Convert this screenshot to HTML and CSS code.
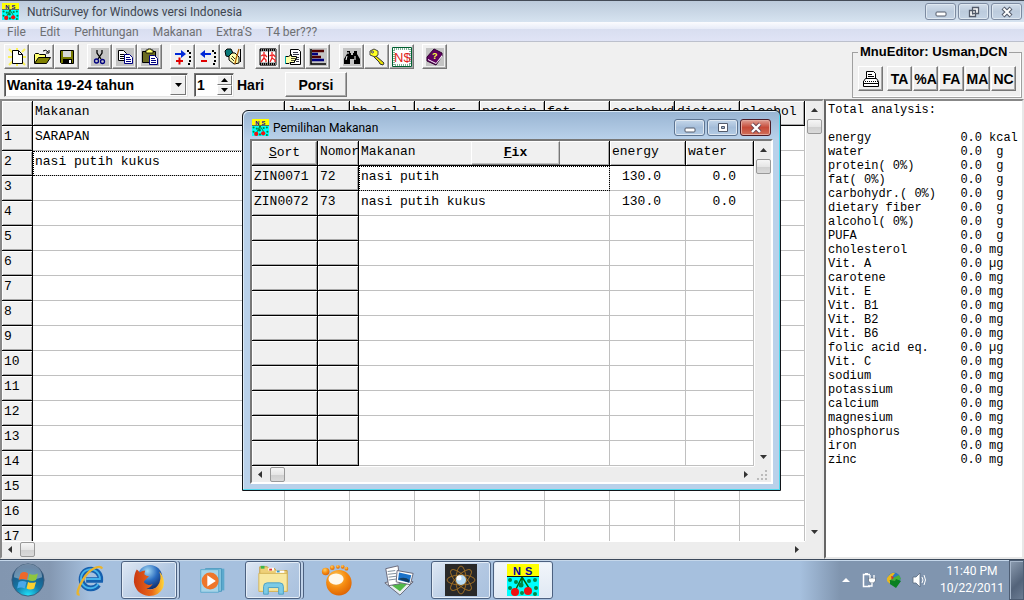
FILE: index.html
```html
<!DOCTYPE html>
<html lang="id">
<head>
<meta charset="utf-8">
<title>NutriSurvey for Windows versi Indonesia</title>
<link rel="stylesheet" href="styles.css">
</head>
<body>
<svg class="defs" aria-hidden="true">
  <symbol id="ns" viewBox="0 0 32 32">
    <path fill="#ff0" d="M0 0h32v12H0z"/><path fill="#0ff" d="M0 13h32v19H0z"/><path fill="#111" d="M0 12h32v1H0z"/>
    <text x="6" y="11" class="ns-letter">N</text><text x="18" y="11" class="ns-letter">S</text>
    <path d="M15 13L9 25M15 13v6M15 13l7 11" stroke="#060" stroke-width="1.4" fill="none"/>
    <g fill="#084"><circle cx="3" cy="16" r="2"/><circle cx="3" cy="24" r="2"/><circle cx="9" cy="18" r="2"/><circle cx="14" cy="21" r="2.5"/><circle cx="22" cy="17" r="2"/><circle cx="28" cy="16" r="2"/><circle cx="29" cy="24" r="2"/><circle cx="15" cy="29" r="2"/><circle cx="28" cy="30" r="2"/></g>
    <circle cx="8" cy="28" r="4" fill="#f01010"/><circle cx="21" cy="27" r="4" fill="#f01010"/>
  </symbol>
  <symbol id="up" viewBox="0 0 7 4"><path d="M0 4L3.500 0 7 4z"/></symbol>
  <symbol id="down" viewBox="0 0 7 4"><path d="M0 0h7L3.500 4z"/></symbol>
  <symbol id="left" viewBox="0 0 4 7"><path d="M4 0v7L0 3.500z"/></symbol>
  <symbol id="right" viewBox="0 0 4 7"><path d="M0 0v7l4-3.500z"/></symbol>
  <symbol id="min" viewBox="0 0 12 12"><rect x="1" y="6" width="10" height="4" rx="1" fill="#fff" stroke="#535b6b"/></symbol>
</svg>

<div class="app">
  <header class="titlebar">
    <svg class="app-icon"><use href="#ns"/></svg>
    <h1 class="title">NutriSurvey for Windows versi Indonesia</h1>
    <div class="window-buttons">
      <button class="wb" aria-label="Minimize"><svg class="i12"><use href="#min"/></svg></button>
      <button class="wb" aria-label="Restore"><svg class="i12" viewBox="0 0 12 12"><path d="M4.500 1.500h6v6h-6z M1.500 4.500h6v6h-6z" fill="#fff" stroke="#535b6b" stroke-width="1.300"/><path d="M4 7h1.500v1.500H4z" fill="#535b6b"/></svg></button>
      <button class="wb" aria-label="Close"><svg class="i12" viewBox="0 0 12 12"><path d="M2 2l8 8M10 2l-8 8" stroke="#535b6b" stroke-width="4.200"/><path d="M2.500 2.500l7 7M9.500 2.500l-7 7" stroke="#fff" stroke-width="2"/></svg></button>
    </div>
  </header>

  <nav class="menubar">
    <button>File</button><button>Edit</button><button>Perhitungan</button><button>Makanan</button><button>Extra'S</button><button>T4 ber???</button>
  </nav>

  <div class="toolbar">
    <div class="tools">
      <div class="tool-row">
        <div class="tool-group">
          <button class="tool" aria-label="New"><svg class="i18" viewBox="0 0 18 18"><path d="M1 1l4 4M9 0v3M17 1l-3 3M0 9h4M14 9h4M1 17l4-4M17 17l-3-3M9 15v3" stroke="#fbf35a" stroke-width="2"/><path d="M4.500 2.500h6l4 4v9h-10z" fill="#fff" stroke="#000"/><path d="M10.500 2.500v4h4" fill="none" stroke="#000"/></svg></button>
          <button class="tool" aria-label="Open"><svg class="i18" viewBox="0 0 18 18"><path d="M1.500 15V6.500l1-1h3l1 1h6V9" fill="#ffff70" stroke="#000"/><path d="M1.500 15.500l4-6h12l-4 6z" fill="#808000" stroke="#000"/><path d="M10 3q3-2 5 1m1-2v3h-3" fill="none" stroke="#000"/></svg></button>
          <button class="tool" aria-label="Save"><svg class="i18" viewBox="0 0 18 18"><path d="M2.500 2.500h13v13h-12l-1-1z" fill="#777a00" stroke="#000"/><path d="M5 3h8v6H5z" fill="#d8d8d8"/><path d="M5 11h9v5H5z"/><path d="M11 12h2v3h-2z" fill="#fff"/></svg></button>
        </div>
        <div class="tool-group">
          <button class="tool" aria-label="Cut"><svg class="i18 shade" viewBox="0 0 18 18"><path d="M6 2v3l4 6M11 2v3l-4 6" stroke="#000" stroke-width="1.300" fill="none"/><g fill="none" stroke="#000080" stroke-width="1.300"><circle cx="5.500" cy="13" r="2"/><circle cx="11.500" cy="13.500" r="2"/></g></svg></button>
          <button class="tool" aria-label="Copy"><svg class="i18 shade" viewBox="0 0 18 18"><path d="M2.500 2.500h5l3 3v7h-8z" fill="#fff" stroke="#000"/><path d="M4 6.500h4M4 8.500h4M4 10.500h4" stroke="#000"/><path d="M8.500 6.500h5l3 3v6h-8z" fill="#fff" stroke="#000080"/><path d="M10 9.500h4M10 11.500h5M10 13.500h5" stroke="#000080"/></svg></button>
          <button class="tool" aria-label="Paste"><svg class="i18 shade" viewBox="0 0 18 18"><path d="M1.500 3.500h13v11h-13z" fill="#6b6b20" stroke="#000"/><path d="M5 4V2h2V1h3v1h2v3H5z" fill="#ffff70" stroke="#000" stroke-width=".8"/><path d="M8.500 7.500h5l3 3v6h-8z" fill="#fff" stroke="#000080"/><path d="M10 10.500h4M10 12.500h5M10 14.500h5" stroke="#000080"/></svg></button>
        </div>
        <div class="tool-group wide">
          <button class="tool" aria-label="Insert row"><svg class="i18" viewBox="0 0 18 18"><path d="M1 5h6V2l5 4-5 4V7H1z" fill="#0028d8"/><path d="M2 13h7M5.500 9.500v7" stroke="#e00000" stroke-width="2"/><path d="M13 3h3v13h-4" fill="none" stroke="#000" stroke-width="2" stroke-dasharray="2 2"/></svg></button>
          <button class="tool" aria-label="Delete row"><svg class="i18" viewBox="0 0 18 18"><path d="M12 5H6V2L1 6l5 4V7h6z" fill="#0028d8"/><path d="M2 13h6" stroke="#e00000" stroke-width="2"/><path d="M13 3h3v13h-4" fill="none" stroke="#000" stroke-width="2" stroke-dasharray="2 2"/></svg></button>
          <button class="tool" aria-label="Edit recipe"><svg class="i18" viewBox="0 0 18 18"><path d="M1 3l2-2h4l2 4-3 4-4-1z" fill="#087878" stroke="#000"/><path d="M5 8l3-3h3l4 4v6l-5 1-5-4z" fill="#ffffb0" stroke="#000"/><path d="M8 8l3 3M7 10l3 3" stroke="#000" stroke-width=".8"/><path d="M15 1L12 11l-1 5" stroke="#b06000" stroke-width="1.300" fill="none"/><path d="M16.500 1v13" stroke="#000"/></svg></button>
        </div>
        <div class="tool-group wider">
          <button class="tool" aria-label="Activity"><svg class="i18" viewBox="0 0 18 18"><path d="M1 1h16v16H1z" fill="#fff" stroke="#000"/><path d="M1 2h16M1 16h16" stroke="#000" stroke-width="2.500"/><path d="M2 2h15M2 16h15" stroke="#fff" stroke-dasharray="1 1"/><path d="M9.500 3v12" stroke="#000"/><path d="M5 4v2M2 8l2-1h2l2 2M5 7v3l-3 4M5 10l2 2v2M13 4v2M10.500 8l2-1h2l2 2M13 7v3l-2 4M13 10l3 2v2" stroke="#f02020" stroke-width="1.300" fill="none"/></svg></button>
          <button class="tool" aria-label="Questionnaire"><svg class="i18" viewBox="0 0 18 18"><path d="M6.500 1.500h8l2 2v13h-10z" fill="#fff" stroke="#000"/><path d="M9 4.500h5M9 6.500h6M12 9.500h3M12 11.500h3M12 13.500h3" stroke="#334"/><path d="M1.500 8.500h3l3-2v2h5v2h-1v2h-1v2H6l-1 1H1.500z" fill="#ffffa8" stroke="#000"/><path d="M1 8h1v8H1z" fill="#0aa"/><path d="M7 10.500h4M7 12.500h4" stroke="#000" stroke-width=".7"/></svg></button>
          <button class="tool" aria-label="Chart"><svg class="i18 shade" viewBox="0 0 18 18"><path d="M2 1v15h15" fill="none" stroke="#000" stroke-width="1.500"/><path d="M3 3h12M3 9h9" stroke="#500000" stroke-width="2.500"/><path d="M3 6h6M3 12h12" stroke="#000080" stroke-width="2.500"/></svg></button>
        </div>
        <div class="tool-group">
          <button class="tool" aria-label="Search"><svg class="i18 shade" viewBox="0 0 18 18"><path d="M4 3h3v2h1v2h2V5h1V3h3v3l3 5v5h-6v-5H7v5H1v-5l3-5z"/><path d="M4 8l-1 4M12 8v4M5 4v2" stroke="#fff"/></svg></button>
          <button class="tool" aria-label="Key"><svg class="i18" viewBox="0 0 18 18"><path d="M8 8l8 7-1 2-3-1-1-2-5-5z" fill="#e8e000" stroke="#333"/><path d="M2 3l4-2 4 2v4L7 9 2 7z" fill="#ffff20" stroke="#444"/><circle cx="4.500" cy="4" r="1" fill="#fff" stroke="#444"/></svg></button>
          <button class="tool" aria-label="NutriSurvey"><svg class="i22" viewBox="0 0 22 22"><path d="M1.500 1.500h19v19h-19z" fill="#fff" stroke="#006030"/><path d="M3 3h16v16H3z" fill="none" stroke="#006030" stroke-dasharray="1 1"/><text x="3" y="16" class="ns-red">N$</text></svg></button>
        </div>
        <div class="tool-group">
          <button class="tool" aria-label="Help"><svg class="i18 shade" viewBox="0 0 18 18"><path d="M1 9l7-8 8 4v3l-6 9-9-4z" fill="#600060" stroke="#300030"/><path d="M2 11l8 4 6-8v2l-6 7-8-4z" fill="#fff"/><text x="6" y="11" class="help-mark">?</text></svg></button>
        </div>
      </div>
      <div class="field-row">
        <div class="combo">
          <select class="combo-select" aria-label="Kelompok"><option>Wanita 19-24 tahun</option></select>
          <span class="combo-arrow"><svg class="i7"><use href="#down"/></svg></span>
        </div>
        <div class="spin">
          <input class="spin-input" id="hari" type="text" value="1">
          <div class="spin-buttons">
            <button aria-label="Tambah"><svg class="i7"><use href="#up"/></svg></button>
            <button aria-label="Kurang"><svg class="i7"><use href="#down"/></svg></button>
          </div>
        </div>
        <label class="hari" for="hari">Hari</label>
        <button class="porsi">Porsi</button>
      </div>
    </div>
    <fieldset class="editor">
      <legend>MnuEditor: Usman,DCN</legend>
      <div class="editor-buttons">
        <button class="tool print" aria-label="Print"><svg class="i18" viewBox="0 0 18 18"><path d="M4.500 8.500v-7h7l2 2v5" fill="#fff" stroke="#000"/><path d="M6 4.500h4M6 6.500h6" stroke="#000"/><path d="M3.500 8.500h11l2 3v5h-15v-5z" fill="#fff" stroke="#000"/><path d="M1 11.500h16" stroke="#000" stroke-dasharray="1 1"/><path d="M1 13.500h16" stroke="#000"/></svg></button>
        <button class="tool">TA</button><button class="tool">%A</button><button class="tool">FA</button><button class="tool">MA</button><button class="tool">NC</button>
      </div>
    </fieldset>
  </div>

  <main class="work">
    <section class="sheet">
      <div class="sheet-view">
        <table class="grid main-grid">
          <colgroup><col class="c-num"><col class="c-food"><col class="c-val"><col class="c-val"><col class="c-val"><col class="c-val"><col class="c-val"><col class="c-val"><col class="c-val"><col class="c-val"></colgroup>
          <thead><tr><th></th><th>Makanan</th><th>Jumlah</th><th>hh.sel.</th><th>water</th><th>protein</th><th>fat</th><th>carbohydr</th><th>dietary</th><th>alcohol</th></tr></thead>
          <tbody>
            <tr><th>1</th><td>SARAPAN</td><td></td><td></td><td></td><td></td><td></td><td></td><td></td><td></td></tr>
            <tr><th>2</th><td class="focus">nasi putih kukus</td><td></td><td></td><td></td><td></td><td></td><td></td><td></td><td></td></tr>
            <tr><th>3</th><td></td><td></td><td></td><td></td><td></td><td></td><td></td><td></td><td></td></tr>
            <tr><th>4</th><td></td><td></td><td></td><td></td><td></td><td></td><td></td><td></td><td></td></tr>
            <tr><th>5</th><td></td><td></td><td></td><td></td><td></td><td></td><td></td><td></td><td></td></tr>
            <tr><th>6</th><td></td><td></td><td></td><td></td><td></td><td></td><td></td><td></td><td></td></tr>
            <tr><th>7</th><td></td><td></td><td></td><td></td><td></td><td></td><td></td><td></td><td></td></tr>
            <tr><th>8</th><td></td><td></td><td></td><td></td><td></td><td></td><td></td><td></td><td></td></tr>
            <tr><th>9</th><td></td><td></td><td></td><td></td><td></td><td></td><td></td><td></td><td></td></tr>
            <tr><th>10</th><td></td><td></td><td></td><td></td><td></td><td></td><td></td><td></td><td></td></tr>
            <tr><th>11</th><td></td><td></td><td></td><td></td><td></td><td></td><td></td><td></td><td></td></tr>
            <tr><th>12</th><td></td><td></td><td></td><td></td><td></td><td></td><td></td><td></td><td></td></tr>
            <tr><th>13</th><td></td><td></td><td></td><td></td><td></td><td></td><td></td><td></td><td></td></tr>
            <tr><th>14</th><td></td><td></td><td></td><td></td><td></td><td></td><td></td><td></td><td></td></tr>
            <tr><th>15</th><td></td><td></td><td></td><td></td><td></td><td></td><td></td><td></td><td></td></tr>
            <tr><th>16</th><td></td><td></td><td></td><td></td><td></td><td></td><td></td><td></td><td></td></tr>
            <tr><th>17</th><td></td><td></td><td></td><td></td><td></td><td></td><td></td><td></td><td></td></tr>
          </tbody>
        </table>
      </div>
      <div class="vscroll"><button aria-label="Up"><svg class="i7"><use href="#up"/></svg></button><span class="thumb"></span><button class="end" aria-label="Down"><svg class="i7"><use href="#down"/></svg></button></div>
      <div class="hscroll"><button aria-label="Left"><svg class="i4"><use href="#left"/></svg></button><span class="thumb"></span><button class="end" aria-label="Right"><svg class="i4"><use href="#right"/></svg></button></div>
      <div class="corner"></div>
    </section>

    <aside class="analysis">
      <h2>Total analysis:</h2>
      <table>
        <tr><td>energy</td><td>0.0</td><td>kcal</td></tr>
        <tr><td>water</td><td>0.0</td><td> g</td></tr>
        <tr><td>protein( 0%)</td><td>0.0</td><td> g</td></tr>
        <tr><td>fat( 0%)</td><td>0.0</td><td> g</td></tr>
        <tr><td>carbohydr.( 0%)</td><td>0.0</td><td> g</td></tr>
        <tr><td>dietary fiber</td><td>0.0</td><td> g</td></tr>
        <tr><td>alcohol( 0%)</td><td>0.0</td><td> g</td></tr>
        <tr><td>PUFA</td><td>0.0</td><td> g</td></tr>
        <tr><td>cholesterol</td><td>0.0</td><td>mg</td></tr>
        <tr><td>Vit. A</td><td>0.0</td><td>µg</td></tr>
        <tr><td>carotene</td><td>0.0</td><td>mg</td></tr>
        <tr><td>Vit. E</td><td>0.0</td><td>mg</td></tr>
        <tr><td>Vit. B1</td><td>0.0</td><td>mg</td></tr>
        <tr><td>Vit. B2</td><td>0.0</td><td>mg</td></tr>
        <tr><td>Vit. B6</td><td>0.0</td><td>mg</td></tr>
        <tr><td>folic acid eq.</td><td>0.0</td><td>µg</td></tr>
        <tr><td>Vit. C</td><td>0.0</td><td>mg</td></tr>
        <tr><td>sodium</td><td>0.0</td><td>mg</td></tr>
        <tr><td>potassium</td><td>0.0</td><td>mg</td></tr>
        <tr><td>calcium</td><td>0.0</td><td>mg</td></tr>
        <tr><td>magnesium</td><td>0.0</td><td>mg</td></tr>
        <tr><td>phosphorus</td><td>0.0</td><td>mg</td></tr>
        <tr><td>iron</td><td>0.0</td><td>mg</td></tr>
        <tr><td>zinc</td><td>0.0</td><td>mg</td></tr>
      </table>
    </aside>
  </main>

  <section class="dialog" role="dialog" aria-labelledby="dialog-title">
    <header class="dialog-title">
      <svg class="app-icon"><use href="#ns"/></svg>
      <h2 class="title" id="dialog-title">Pemilihan Makanan</h2>
      <div class="window-buttons">
        <button class="wb" aria-label="Minimize"><svg class="i12"><use href="#min"/></svg></button>
        <button class="wb" aria-label="Maximize"><svg class="i12" viewBox="0 0 12 12"><path d="M1.500 1.500h9v8h-9z" fill="#fff" stroke="#535b6b"/><path d="M4.500 4.500h3v2h-3z" fill="#a9bdd6" stroke="#535b6b"/></svg></button>
        <button class="wb close" aria-label="Close"><svg class="i12" viewBox="0 0 12 12"><path d="M2 2l8 8M10 2l-8 8" stroke="#6b4350" stroke-width="4"/><path d="M2 2l8 8M10 2l-8 8" stroke="#fff" stroke-width="2.400"/></svg></button>
      </div>
    </header>
    <div class="sheet dialog-sheet">
      <div class="sheet-view">
        <table class="grid">
          <colgroup><col class="d-code"><col class="d-no"><col class="d-food"><col class="d-energy"><col></colgroup>
          <thead><tr><th class="button-cell"><button class="head-button"><u>S</u>ort</button></th><th>Nomor</th><th class="food-head"><div class="food-tools"><span>Makanan</span><button class="head-button"><u>F</u>ix</button></div></th><th>energy</th><th>water</th></tr></thead>
          <tbody>
            <tr><th>ZIN0071</th><th>72</th><td class="focus">nasi putih</td><td class="num">130.0</td><td class="num">0.0</td></tr>
            <tr><th>ZIN0072</th><th>73</th><td>nasi putih kukus</td><td class="num">130.0</td><td class="num">0.0</td></tr>
            <tr><th></th><th></th><td></td><td></td><td></td></tr>
            <tr><th></th><th></th><td></td><td></td><td></td></tr>
            <tr><th></th><th></th><td></td><td></td><td></td></tr>
            <tr><th></th><th></th><td></td><td></td><td></td></tr>
            <tr><th></th><th></th><td></td><td></td><td></td></tr>
            <tr><th></th><th></th><td></td><td></td><td></td></tr>
            <tr><th></th><th></th><td></td><td></td><td></td></tr>
            <tr><th></th><th></th><td></td><td></td><td></td></tr>
            <tr><th></th><th></th><td></td><td></td><td></td></tr>
            <tr><th></th><th></th><td></td><td></td><td></td></tr>
          </tbody>
        </table>
      </div>
      <div class="vscroll"><button aria-label="Up"><svg class="i7"><use href="#up"/></svg></button><span class="thumb"></span><button class="end" aria-label="Down"><svg class="i7"><use href="#down"/></svg></button></div>
      <div class="hscroll"><button aria-label="Left"><svg class="i4"><use href="#left"/></svg></button><span class="thumb"></span><button class="end" aria-label="Right"><svg class="i4"><use href="#right"/></svg></button></div>
      <div class="corner"><svg class="i12" viewBox="0 0 12 12"><path d="M8 2h2v2H8zM8 6h2v2H8zM4 6h2v2H4zM8 10h2v2H8zM4 10h2v2H4zM0 10h2v2H0z" fill="#bbb"/></svg></div>
    </div>
  </section>

  <footer class="taskbar">
    <button class="task start" aria-label="Start"><svg class="i36" viewBox="0 0 36 36">
      <defs><radialGradient id="orb" cx=".5" cy="1" r=".9"><stop offset="0" stop-color="#20e8ff"/><stop offset=".45" stop-color="#147aa8"/><stop offset="1" stop-color="#1f4a78"/></radialGradient></defs>
      <circle cx="18" cy="18" r="17" fill="url(#orb)" stroke="#3b5a78"/><path d="M3 15a15 14 0 0 1 30 0q-15 6-30 0z" fill="#fff" opacity=".35"/>
      <path d="M10 11q4-3 8 0l-1 7q-4-2-9 0z" fill="#f0682a"/><path d="M19.500 11.500q4 2 9-.5l-2 7q-4 2-8.500 0z" fill="#8fc63f"/><path d="M8 20q4-2 8.500 0l-2 7q-4-2-8 0z" fill="#4aa8e8"/><path d="M18 20q4 2 8.500 0l-2 7q-4 2-8 0z" fill="#fcd030"/></svg></button>
    <button class="task" aria-label="Internet Explorer"><svg class="i36" viewBox="0 0 36 36"><path d="M28 23a10 10 0 1 1 2-5H15" fill="none" stroke="#155fae" stroke-width="6"/><path d="M28 22a10 10 0 1 1 1.500-5H15" fill="none" stroke="#46b3ea" stroke-width="2"/><path d="M32 6c-3-5-14 1-20 11S4 35 8 33" fill="none" stroke="#e9b42e" stroke-width="2.500"/></svg></button>
    <button class="task open stacked" aria-label="Firefox"><svg class="i36" viewBox="0 0 36 36"><defs><radialGradient id="globe" cx=".4" cy=".25" r=".8"><stop offset="0" stop-color="#a7dcf5"/><stop offset=".5" stop-color="#2a6cc0"/><stop offset="1" stop-color="#0c2460"/></radialGradient><linearGradient id="fox" x1="0" x2="1"><stop offset="0" stop-color="#c93812"/><stop offset=".6" stop-color="#ea6818"/><stop offset="1" stop-color="#ffd83a"/></linearGradient></defs><circle cx="19" cy="15" r="13" fill="url(#globe)"/><path d="M5 7q2 1 3 3 3-2 6-2l-1 4q2 2 5 2l-4 4q-2 1-1 3 4 4 9 1-3 5-7 5 7 3 12-3 5-6 2-15 7 8 4 17-4 9-15 9Q4 33 2 20 2 12 5 7z" fill="url(#fox)"/></svg></button>
    <button class="task" aria-label="Media Player"><svg class="i36" viewBox="0 0 36 36"><path d="M13 6h17v23H13z" fill="#5ba9cd"/><path d="M10 6h17v24H10z" fill="#83c3dd" stroke="#4a98bd"/><path d="M5 7h19v24H5z" fill="#a6d4e8" stroke="#5ba9cd"/><circle cx="15" cy="19" r="9" fill="#ee762a"/><path d="M12 13l9 6-9 6z" fill="#fff"/></svg></button>
    <button class="task open stacked" aria-label="Explorer"><svg class="i36" viewBox="0 0 36 36"><path d="M4 4h8l2 2h6l1 2h12v22H4z" fill="#eed078" stroke="#c29c40"/><path d="M5 3h4v3H5z" fill="#3ab54a"/><path d="M13 5h6v3h-6z" fill="#fff"/><path d="M14 6h3v2h-3z" fill="#d33"/><path d="M21 8h9v3h-9z" fill="#fff"/><path d="M22 8h3v2h-3z" fill="#39c"/><path d="M3 11h30v19H3z" fill="#f8e8a0" stroke="#d4b458"/><path d="M8 33v-8q0-4 4-4h13q4 0 4 4v8h-5v-7H13v7z" fill="#7ccbe6" stroke="#4a9fc4"/></svg></button>
    <button class="task" aria-label="GOM Player"><svg class="i36" viewBox="0 0 36 36"><defs><radialGradient id="gom" cx=".4" cy=".3" r=".8"><stop offset="0" stop-color="#ffd060"/><stop offset=".5" stop-color="#f58a10"/><stop offset="1" stop-color="#d85a00"/></radialGradient></defs><g fill="url(#gom)"><circle cx="20" cy="21" r="13.500"/><circle cx="6" cy="9" r="4"/><circle cx="13" cy="5" r="2.500"/><circle cx="19" cy="4" r="2"/><circle cx="24" cy="4" r="2"/><circle cx="28" cy="6" r="2"/></g><ellipse cx="17" cy="17" rx="8" ry="6" fill="#fff8ec"/></svg></button>
    <button class="task" aria-label="Photo"><svg class="i36" viewBox="0 0 36 36"><path d="M3 21l16 13 14-14-12-5z" fill="#e9eef0" stroke="#667"/><path d="M8 22l11 8 9-9z" fill="#52b848"/><path d="M4 6l13-3 2 19-12 2z" fill="#fff" stroke="#667"/><path d="M6 9l8-1M6 12l9-1M7 15l8-1M7 18l8-1" stroke="#7a8a98"/><path d="M16 8l17 3-3 12-15-3z" fill="#fff" stroke="#667"/><path d="M18 10l13 3-2 8-12-3z" fill="#1c72c8"/><path d="M17 17q7-3 12 1v3z" fill="#123c60"/></svg></button>
    <button class="task open" aria-label="Atom"><svg class="i32" viewBox="0 0 32 32"><path d="M0 0h32v32H0z" fill="#292929"/><g fill="none" stroke="#a87424" stroke-width=".9"><ellipse cx="16" cy="16" rx="14" ry="5"/><ellipse cx="16" cy="16" rx="14" ry="5" transform="rotate(45 16 16)"/><ellipse cx="16" cy="16" rx="14" ry="5" transform="rotate(90 16 16)"/><ellipse cx="16" cy="16" rx="14" ry="5" transform="rotate(135 16 16)"/></g><circle cx="16" cy="16" r="5" fill="#b8dcf4"/><circle cx="14" cy="14" r="2.500" fill="#fff"/></svg></button>
    <button class="task open active" aria-label="NutriSurvey"><svg class="i32"><use href="#ns"/></svg></button>
    <div class="tray">
      <svg class="i8" viewBox="0 0 8 8"><path d="M0 6l4-4 4 4z" fill="#fff"/></svg>
      <svg class="i16" viewBox="0 0 16 16"><path d="M9 2.500H2.500v12H9" fill="none" stroke="#fff" stroke-width="1.500"/><path d="M4 1h3v2H4z" fill="#fff"/><path d="M7.500 6h7v3l-2 2h-3l-2-2z" fill="#fff" stroke="#48586c" stroke-width=".6"/><path d="M9 3v3M13 3v3M11 11v3H7" fill="none" stroke="#fff" stroke-width="1.300"/></svg>
      <svg class="i16" viewBox="0 0 16 16"><circle cx="8" cy="7" r="6.500" fill="#2e78c0"/><path d="M1 6q4-6 8-5l-3 4-2 7-3-3z" fill="#e8b820"/><path d="M3 9q5-4 10-6l2 4-4 2z" fill="#48b038"/><path d="M4 8l5 1 1-2 5 2-5 7-6-4z" fill="#0a8020"/><path d="M5 4l3 1-2 3z" fill="#d83020"/></svg>
      <svg class="i16" viewBox="0 0 16 16"><path d="M2 5h3l4-4v14l-4-4H2z" fill="#fff" stroke="#59697e" stroke-width=".8"/><path d="M11 5q2 3 0 6M13 3q3 5 0 10" fill="none" stroke="#fff"/></svg>
      <div class="clock"><span>11:40 PM</span><span>10/22/2011</span></div>
    </div>
    <button class="show-desktop" aria-label="Show desktop"></button>
  </footer>
</div>
</body>
</html>
```
FILE: styles.css
```css
* { box-sizing: border-box; }
html, body { height: 100%; }
body { margin: 0; font-family: Roboto, "Noto Sans", sans-serif; font-size: 12px; color: #000; background: #f0f0f0; overflow: hidden; }
button, input, select { margin: 0; padding: 0; border: 0; background: none; font: inherit; color: inherit; border-radius: 0; }
button { display: flex; align-items: center; justify-content: center; }
h1, h2 { margin: 0; font-size: 12px; font-weight: 400; }
svg { display: block; flex: none; }
.defs { position: absolute; width: 0; height: 0; }
.i4 { width: 4px; height: 7px; }
.i7 { width: 7px; height: 4px; }
.i8 { width: 8px; height: 8px; }
.i12 { width: 12px; height: 12px; }
.i16 { width: 16px; height: 16px; }
.i18 { width: 18px; height: 18px; }
.i22 { width: 22px; height: 22px; }
.i32 { width: 32px; height: 32px; }
.i36 { width: 34px; height: 34px; }
.shade { background: #c4c4c4; }
.ns-letter { font: bold 11px "Liberation Sans", sans-serif; fill: #0000a0; }
.ns-red { font: 13px "Liberation Sans", sans-serif; fill: #e02020; }
.help-mark { font: bold 9px "Liberation Sans", sans-serif; fill: #ffff40; }

.app { position: relative; display: flex; flex-direction: column; height: 100%; }

/* Title bar and menus */
.titlebar { display: flex; align-items: center; height: 22px; flex: none; padding-left: 2px; border-top: 1px solid #444b57; background: linear-gradient(#bccadb, #d6e3f0); color: #3f4650; }
.app-icon { width: 17px; height: 17px; }
.title { flex: 1; padding-left: 8px; }
.window-buttons { display: flex; gap: 2px; padding-right: 2px; }
.wb { width: 31px; height: 17px; border: 1px solid #7d8ba1; border-radius: 3px; background: linear-gradient(#d2ddea, #bccbdd 50%, #c4d3e4); box-shadow: inset 0 0 0 1px #dfe8f1; }
.menubar { display: flex; align-items: center; gap: 14px; height: 20px; flex: none; padding-left: 7px; background: linear-gradient(#fbfcfe, #e8ecf8 35%, #d8def0 36%, #e0e4f6); border-bottom: 1px solid #bcc0cc; color: #6f7073; }

/* Toolbar */
.toolbar { display: flex; justify-content: space-between; height: 57px; flex: none; padding: 2px 2px 0 4px; background: #f0f0f0; font-family: "Liberation Sans", Arial, sans-serif; font-weight: 700; }
.tool-row { display: flex; }
.tool-group { display: flex; margin-right: 8px; }
.tool-group.wide { margin-right: 10px; }
.tool-group.wider { margin-right: 9px; }
.tool { width: 25px; height: 25px; border: 1px solid; border-color: #fff #777 #777 #fff; box-shadow: inset -1px -1px #a8a8a8; font-size: 14px; }
.field-row { display: flex; align-items: center; margin-top: 3px; font-size: 14px; }
.combo { display: flex; width: 184px; height: 24px; padding: 1px; background: #fff; border: 1px solid; border-color: #777 #e4e4e4 #e4e4e4 #777; box-shadow: inset 1px 1px #555; }
.combo-select { flex: 1; appearance: none; padding-left: 1px; outline: 0; }
.combo-arrow, .spin-buttons button { display: flex; align-items: center; justify-content: center; width: 16px; background: #f0f0f0; border: 1px solid; border-color: #fff #777 #777 #fff; }
.spin { display: flex; width: 40px; height: 24px; margin-left: 6px; padding: 1px; background: #fff; border: 1px solid; border-color: #777 #e4e4e4 #e4e4e4 #777; box-shadow: inset 1px 1px #555; }
.spin-input { flex: 1; min-width: 0; padding-left: 1px; outline: 0; }
.spin-buttons { display: flex; flex-direction: column; width: 15px; }
.spin-buttons button { flex: 1; width: 15px; }
.hari { width: 51px; padding-left: 3px; }
.porsi { width: 62px; height: 25px; border: 1px solid; border-color: #fff #777 #777 #fff; box-shadow: inset -1px -1px #a8a8a8; }
.editor { margin: 0; padding: 0 5px 4px; height: 54px; border: 1px solid #a0a0a0; box-shadow: inset -1px -1px #fff; font-size: 13px; }
.editor legend { padding: 0 2px; line-height: 16px; }
.editor-buttons { display: flex; gap: 1px; padding-top: 6px; }
.print { margin-right: 3px; }

/* Sheets with their scroll bars */
.work { display: flex; flex: 1; min-height: 0; }
.sheet { display: grid; grid-template: minmax(0, 1fr) 16px / minmax(0, 1fr) 17px; flex: 1; min-width: 0; border: 2px solid; border-color: #888 #e8e8e8 #e8e8e8 #888; background: #fff; }
.sheet-view { overflow: hidden; }
.grid { border-collapse: separate; border-spacing: 0; table-layout: fixed; width: 100%; font-family: "Liberation Mono", "Courier New", monospace; font-size: 13px; line-height: 16px; }
.grid th, .grid td { height: 25px; padding: 0 2px 2px; border-right: 1px solid #c0c0c0; border-bottom: 1px solid #c0c0c0; text-align: left; font-weight: 400; white-space: nowrap; overflow: hidden; }
.grid th { background: #f0f0f0; border-color: #000; box-shadow: inset 1px 1px #fff, inset -1px -1px #a8a8a8; }
.grid .focus { outline: 1px dotted #000; outline-offset: -1px; }
.grid .num { text-align: right; padding-right: 17px; }
.grid .num:nth-child(4) { padding-right: 24px; }
.c-num { width: 31px; }
.c-val { width: 65px; }
.vscroll, .hscroll, .corner { display: flex; background: #ededed; }
.vscroll { flex-direction: column; align-items: center; border-left: 1px solid #fff; }
.hscroll { align-items: center; border-top: 1px solid #fff; }
.vscroll button, .hscroll button { width: 16px; height: 16px; }
.vscroll button { height: 18px; }
.vscroll .end { margin-top: auto; }
.hscroll .end { margin-left: auto; }
.vscroll svg, .hscroll svg { fill: #333; }
.thumb { width: 15px; height: 15px; border: 1px solid #999; border-radius: 2px; background: linear-gradient(#f6f6f6, #e6e6e6 50%, #d0d0d0 52%, #dadada); }
.hscroll .thumb { margin-left: 2px; }
.corner { align-items: center; justify-content: center; }

.analysis { width: 200px; padding: 2px 4px 0 2px; border: 2px solid; border-color: #888 #e8e8e8 #e8e8e8 #666; background: #fff; font-family: "Liberation Mono", "Courier New", monospace; font-size: 12px; line-height: 14px; }
.analysis h2 { padding-bottom: 14px; }
.analysis table { border-collapse: collapse; width: 190px; }
.analysis td { padding: 0; white-space: pre; }
.analysis td:nth-child(2) { text-align: right; }
.analysis td:nth-child(3) { width: 36px; padding-left: 7px; }

/* Food selection window, floating over the sheet */
.dialog { position: absolute; left: 242px; top: 110px; width: 539px; height: 381px; display: flex; flex-direction: column; padding: 0 7px 8px; border: 1px solid #101418; border-radius: 6px 6px 0 0; background: linear-gradient(#98b4d2, #b9d1ea 28px, #b9d1ea); box-shadow: inset -1px -1px #50d8ee, inset 1px 1px #dceaf6; }
.dialog-title { display: flex; align-items: center; height: 28px; flex: none; padding: 5px 0 0 2px; }
.dialog-title .title { padding-left: 4px; }
.dialog .wb { border-color: #5d7491; background: linear-gradient(#c5d7ea, #a4bdd9 50%, #b4cce5); }
.dialog .close { border-color: #4f1c26; background: linear-gradient(#e0a196, #c64a38 50%, #d0705a); box-shadow: inset 0 0 0 1px #e4a89c; }
.dialog-sheet { border-color: #777 #fff #fff #777; }
.d-code { width: 66px; }
.d-no { width: 41px; }
.d-food { width: 251px; }
.d-energy { width: 76px; }
.grid .button-cell, .grid .food-head { padding: 0; }
.head-button { width: 100%; height: 24px; border: 1px solid; border-color: #fff #777 #777 #fff; box-shadow: inset -1px -1px #c0c0c0; }
.food-tools { display: flex; height: 24px; }
.food-tools span { width: 112px; padding: 3px 2px; }
.food-tools .head-button { width: 89px; font-weight: 700; }

/* Taskbar */
.taskbar { display: flex; align-items: center; height: 41px; flex: none; border-top: 1px solid #3c4a5c; box-shadow: inset 0 1px #c5d7ea; background: linear-gradient(90deg, #8296b0, #8498b2 50px, #a6c0de 90px, #a6c0de 800px, #8095af 840px, #8095af); }
.task { width: 60px; height: 38px; margin-right: 2px; flex: none; }
.start { width: 55px; margin-right: 4px; }
.task.open { border: 1px solid #4c6180; border-radius: 3px; background: linear-gradient(135deg, #dfe8f4, #b3c8e2 60%, #a9c1de); box-shadow: inset 0 0 0 1px #e4edf7; }
.task.stacked { width: 56px; margin: 0 6px 0 0; box-shadow: inset 0 0 0 1px #e4edf7, 2px 0 #c0d2e8, 3px 0 #4c6180; }
.task.active { background: linear-gradient(#f2f6fb, #dfe8f3); }
.tray { display: flex; align-items: center; gap: 9px; height: 100%; margin-left: auto; padding-right: 1px; color: #fff; }
.tray .i8 { margin-right: 2px; }
.clock { display: flex; flex-direction: column; align-items: center; width: 72px; line-height: 17px; }
.show-desktop { width: 15px; height: 40px; border: 1px solid #4d5d73; background: linear-gradient(135deg, #8d9db1, #53637a 60%, #6b7c93); box-shadow: inset 1px 1px #a6b6ca; }
```
